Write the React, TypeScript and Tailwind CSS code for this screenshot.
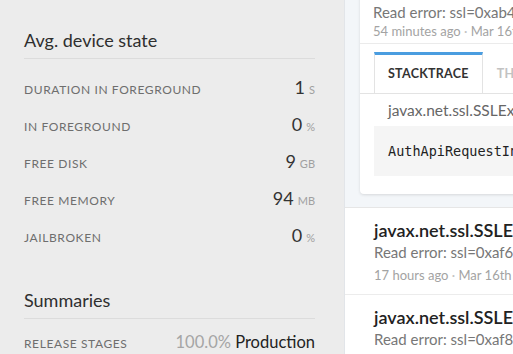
import React from "react";

type Stat = { label: string; value: string; unit: string };

const deviceStats: Stat[] = [
  { label: "Duration in foreground", value: "1", unit: "s" },
  { label: "In foreground", value: "0", unit: "%" },
  { label: "Free disk", value: "9", unit: "GB" },
  { label: "Free memory", value: "94", unit: "MB" },
  { label: "Jailbroken", value: "0", unit: "%" },
];

const events = [
  { title: "javax.net.ssl.SSLException", message: "Read error: ssl=0xaf6a2c00", time: "17 hours ago", date: "Mar 16th" },
  { title: "javax.net.ssl.SSLException", message: "Read error: ssl=0xaf8b1e00", time: "19 hours ago", date: "Mar 16th" },
];

const SectionTitle: React.FC<{ children: React.ReactNode }> = ({ children }) => (
  <h2 className="text-[18px] leading-[28px] text-[#2f2f2f] pb-1 border-b border-[#dcdcdc]">
    {children}
  </h2>
);

const App: React.FC = () => {
  return (
    <div
      className="flex h-[354px] w-[513px] overflow-hidden"
      style={{ fontFamily: "Lato, 'Open Sans', sans-serif" }}
    >
      {/* sidebar */}
      <aside className="w-[344px] shrink-0 bg-[#ececec] pl-6 pr-[29px] pt-[26px]">
        <SectionTitle>Avg. device state</SectionTitle>
        <div className="pt-[10px]">
          {deviceStats.map((s) => (
            <div key={s.label} className="flex items-baseline justify-between h-[37px] leading-[37px]">
              <span className="text-[12px] uppercase tracking-[0.05em] text-[#6e6e6e]">
                {s.label}
              </span>
              <span className="text-[18px] text-[#333]">
                {s.value}
                <span className="ml-1 text-[11px] uppercase text-[#a0a0a0]">{s.unit}</span>
              </span>
            </div>
          ))}
        </div>

        <div className="mt-[32px]">
          <SectionTitle>Summaries</SectionTitle>
          <div className="flex items-baseline justify-between h-[37px] leading-[37px] mt-[5px]">
            <span className="text-[12px] uppercase tracking-[0.05em] text-[#6e6e6e]">
              Release stages
            </span>
            <span className="text-[16.5px] text-[#222]">
              <span className="text-[#a5a5a5]">100.0%</span> Production
            </span>
          </div>
        </div>
      </aside>

      {/* events */}
      <main className="flex-1 min-w-0 bg-[#f3f6f9] border-l border-[#e2e5e9]">
        <div className="ml-[15px] -mt-[10px] w-[420px] bg-white rounded shadow-[0_1px_3px_rgba(0,0,0,0.12)]">
          <div className="px-[13px] pt-[11px] pb-1 border-b border-[#ebebeb]">
            <div className="text-[15px] leading-[22px] text-[#777] whitespace-nowrap">
              Read error: ssl=0xab4c2e00: I/O error during system call
            </div>
            <div className="text-[13px] leading-[16px] text-[#a3a3a3] whitespace-nowrap">
              54 minutes ago <span className="text-[#c4c4c4]">·</span> Mar 16th 2017
            </div>
          </div>

          <div className="pt-2 border-b border-[#e3e3e3] flex pl-[14px]">
            <div className="h-[41px] px-[13px] flex items-center bg-white border-t-[3px] border-t-[#4a9de0] border-x border-x-[#e3e3e3] text-[12.5px] font-bold tracking-[0.02em] text-[#333]">
              STACKTRACE
            </div>
            <div className="h-[41px] px-[14px] pt-[3px] flex items-center text-[12.5px] font-bold tracking-[0.02em] text-[#c2c2c2]">
              THREADS
            </div>
          </div>

          <div className="px-[14px] pt-[5px] pb-[18px]">
            <div className="pl-[14px] text-[15.5px] leading-[22px] text-[#666] whitespace-nowrap">
              javax.net.ssl.SSLException: Read error
            </div>
            <div
              className="mt-[5px] h-[50px] px-[14px] flex items-center bg-[#f5f5f5] text-[13.5px] text-[#222] whitespace-nowrap"
              style={{ fontFamily: "'DejaVu Sans Mono', monospace" }}
            >
              AuthApiRequestInterceptor.java:42
            </div>
          </div>
        </div>

        <ul className="mt-[13px] bg-white border-t border-[#e6e6e6]">
          {events.map((e, i) => (
            <li
              key={i}
              className="pl-[29px] pt-[10px] pb-[6px] border-b border-[#ececec] whitespace-nowrap"
            >
              <div className="text-[18px] leading-[24px] font-semibold text-[#222]">{e.title}</div>
              <div className="text-[15px] leading-[20px] text-[#777]">{e.message}</div>
              <div className="text-[13px] leading-[26px] text-[#a3a3a3]">
                {e.time} <span className="text-[#c4c4c4]">·</span> {e.date}
              </div>
            </li>
          ))}
        </ul>
      </main>
    </div>
  );
};

export default App;
